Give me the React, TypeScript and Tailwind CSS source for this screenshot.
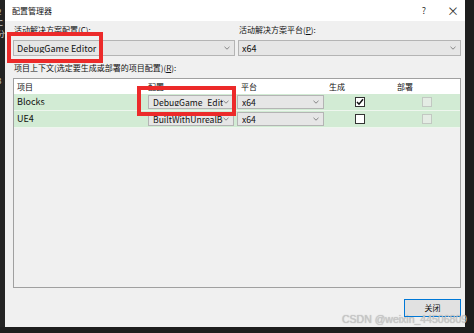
import React from "react";

function Chevron() {
  return (
    <svg width="6" height="4" viewBox="0 0 6 4" className="shrink-0">
      <polyline points="0.5,0.8 3,3.2 5.5,0.8" fill="none" stroke="#7a7a7a" strokeWidth="0.9" />
    </svg>
  );
}

function Combo({ value, className = "", textClass = "text-[9px]" }: { value: string; className?: string; textClass?: string }) {
  return (
    <div className={`flex items-center border border-[#b4b4b4] bg-[#e6e6e6] pl-[3px] pr-[4px] ${className}`}>
      <span className={`flex-1 overflow-hidden whitespace-nowrap leading-none text-[#111] ${textClass}`}>{value}</span>
      <Chevron />
    </div>
  );
}

function Check({ checked }: { checked: boolean }) {
  return (
    <div className="w-[10px] h-[10px] border border-[#333] bg-white flex items-center justify-center">
      {checked && (
        <svg width="8" height="8" viewBox="0 0 8 8">
          <polyline points="1,4 3,6.2 7,1.2" fill="none" stroke="#111" strokeWidth="1.5" />
        </svg>
      )}
    </div>
  );
}

function DisabledCheck() {
  return <div className="w-[10px] h-[10px] border border-[#c2c8c2] bg-[#e4ece4]" />;
}

export default function App() {
  return (
    <div className="w-[474px] h-[333px] bg-[#1e1e1e] flex overflow-hidden relative font-['Noto_Sans_CJK_SC','Noto_Sans',sans-serif] text-[#111]">
      {/* left strip */}
      <div className="w-[5px] h-[327px] bg-[#232323] flex flex-col overflow-hidden text-[8px] leading-[11px] text-[#cfcfcf] pt-[6px] pl-0">
        <span className="-ml-[3px]">2</span>
        <span className="-ml-[2px]">C</span>
        <span className="-ml-[3px]">分</span>
        <span className="mt-[36px] -ml-[3px]">3</span>
      </div>
      {/* dialog */}
      <div className="w-[460px] h-[327px] bg-[#f0f0f0] flex flex-col">
        <div className="h-[21px] bg-white flex items-center pl-[7px] pr-[8px]">
          <span className="text-[8px] flex-1">配置管理器</span>
          <span className="text-[9px] text-[#333] w-[10px] text-center">?</span>
          <span className="ml-[18px] text-[12px] leading-none text-[#333] w-[10px] text-center">×</span>
        </div>
        <div className="flex flex-col pl-[8px] pr-[4px]">
          <div className="flex gap-[3px] mt-[3px]">
            <div className="w-[222px] flex flex-col">
              <div className="h-[12px] leading-[12px] text-[8px] pl-[1px]">
                活动解决方案配置(<span className="underline">C</span>):
              </div>
              <Combo value="DebugGame Editor" className="mt-[4px] h-[16px]" />
            </div>
            <div className="flex-1 flex flex-col">
              <div className="h-[12px] leading-[12px] text-[8px] pl-[1px]">
                活动解决方案平台(<span className="underline">P</span>):
              </div>
              <Combo value="x64" className="mt-[4px] h-[16px]" />
            </div>
          </div>
          <div className="mt-[6px] h-[12px] leading-[12px] text-[8px] pl-[1px]">
            项目上下文(选定要生成或部署的项目配置)(<span className="underline">R</span>):
          </div>
          <div className="mt-[4px] h-[210px] border border-[#a0a0a0] bg-[#f0f0f0] flex flex-col">
            <div className="grid grid-cols-[133px_89px_90px_67px_67px] h-[15px] bg-white text-[8px] leading-[15px]">
              <div className="pl-[3px]">项目</div>
              <div className="pl-[1px]">配置</div>
              <div className="pl-[5px]">平台</div>
              <div className="pl-[3px]">生成</div>
              <div className="pl-[4px]">部署</div>
            </div>
            {[
              { name: "Blocks", cfg: "DebugGame_Editor", build: true },
              { name: "UE4", cfg: "BuiltWithUnrealBuild", build: false },
            ].map((r) => (
              <div key={r.name} className="grid grid-cols-[133px_89px_90px_67px_67px] h-[17px] bg-[#d2ebd4] border-b border-[#eef6ee]">
                <div className="pl-[3px] text-[9px] leading-[16px]">{r.name}</div>
                <div className="py-[1px] pr-[2px] pl-[1px]">
                  <Combo value={r.cfg} className="h-[14px] pl-[4px] pr-[3px]" textClass="text-[8.6px]" />
                </div>
                <div className="py-[1px] pr-[2px] pl-[1px]">
                  <Combo value="x64" className="h-[14px] pl-[4px]" textClass="text-[8.6px]" />
                </div>
                <div className="flex items-center justify-center">
                  <Check checked={r.build} />
                </div>
                <div className="flex items-center justify-center">
                  <DisabledCheck />
                </div>
              </div>
            ))}
          </div>
          <div className="mt-[11px] flex justify-end">
            <div className="w-[57px] h-[18px] border border-[#0078d7] bg-[#e1e1e1] flex items-center justify-center text-[8px]">
              关闭
            </div>
          </div>
        </div>
      </div>
      {/* annotations */}
      <div className="absolute left-[7px] top-[32px] w-[96px] h-[31px] border-[4px] border-[#ec2a2a]" />
      <div className="absolute left-[137px] top-[86px] w-[99px] h-[30px] border-[4px] border-[#ec2a2a]" />
      <div className="absolute left-[342px] top-[314px] text-[10.5px] leading-none font-['Liberation_Sans',sans-serif] text-[#c8c8c8] [text-shadow:0_0_1px_rgba(90,90,90,0.45)]">
        CSDN @weixin_44506809
      </div>
    </div>
  );
}
